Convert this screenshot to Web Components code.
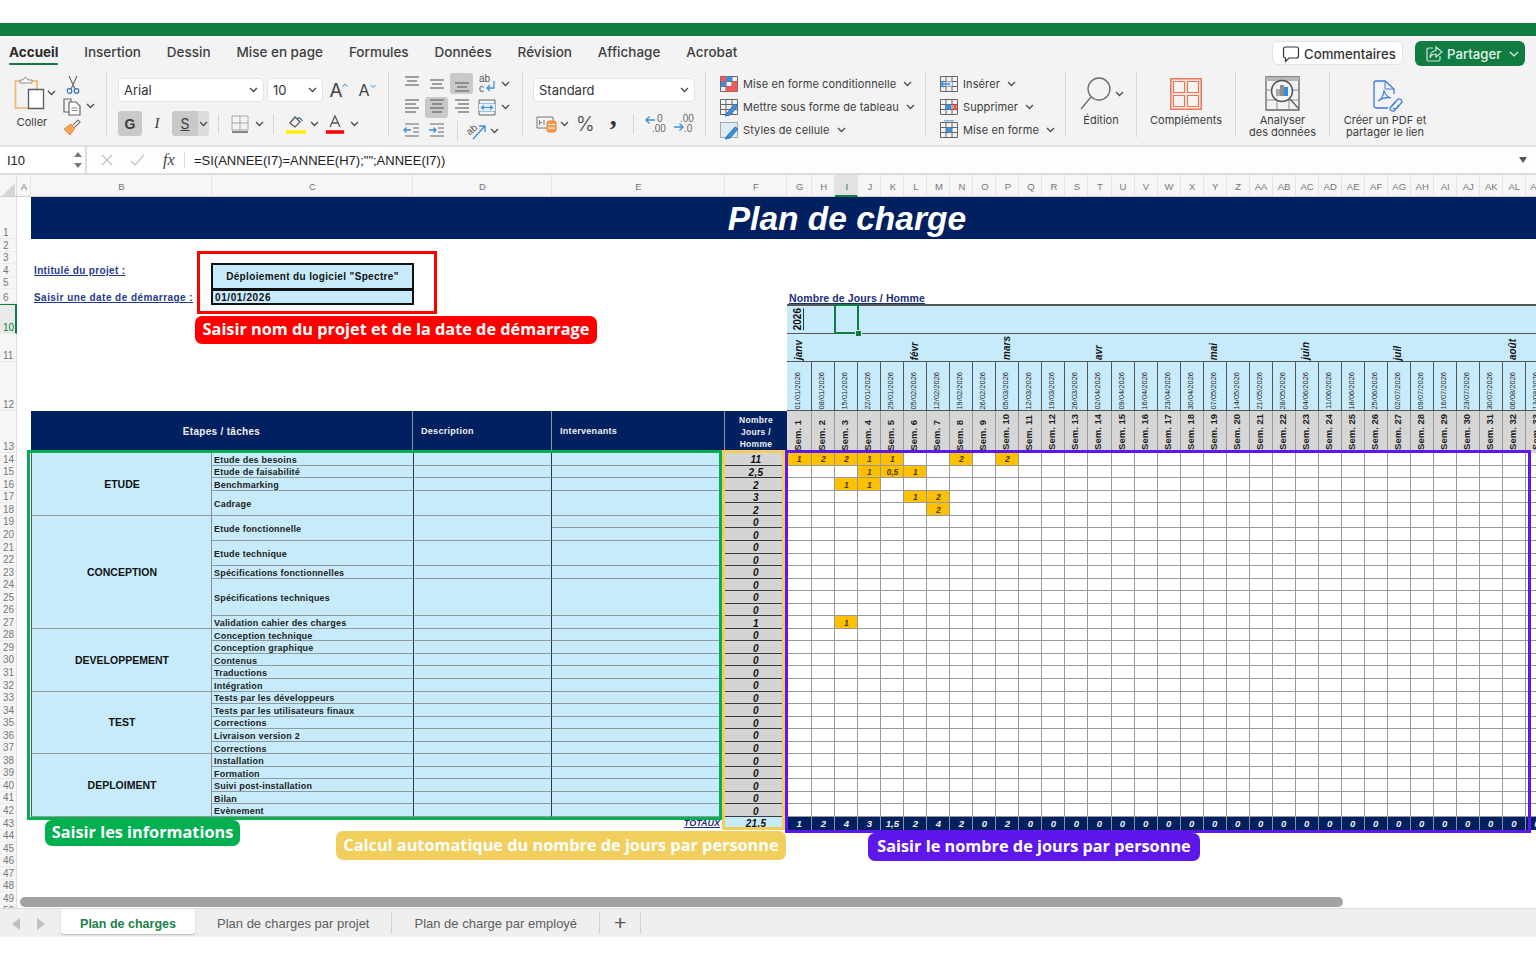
<!DOCTYPE html>
<html lang="fr">
<head>
<meta charset="utf-8">
<title>Plan de charge</title>
<style>
  html, body { margin: 0; background: #fff; }
  body { width: 1536px; height: 960px; overflow: hidden; display: flex; flex-direction: column; font-family: "Liberation Sans", Arial, sans-serif; }
  .title-gap { height: 23px; flex: none; }
</style>
</head>
<body>
<div class="title-gap"></div>
<xl-ribbon></xl-ribbon>
<xl-formula-bar cell="I10" formula='=SI(ANNEE(I7)=ANNEE(H7);"";ANNEE(I7))'></xl-formula-bar>
<xl-sheet>
  <xl-callout color="#ff0000" frame="197,251,240,63" label="195,316,402,28">Saisir nom du projet et de la date de démarrage</xl-callout>
  <xl-callout color="#00b050" frame="27,450,695,370" label="45,820,195,26">Saisir les informations</xl-callout>
  <xl-callout color="#f2cf5c" frame="722,450,63,380" label="336,831,450,29">Calcul automatique du nombre de jours par personne</xl-callout>
  <xl-callout color="#5e17eb" frame="785,450,746,383" label="868,833,332,28">Saisir le nombre de jours par personne</xl-callout>
</xl-sheet>
<xl-tabs>
  <xl-tab active>Plan de charges</xl-tab>
  <xl-tab>Plan de charges par projet</xl-tab>
  <xl-tab>Plan de charge par employé</xl-tab>
  <xl-tab plus>+</xl-tab>
</xl-tabs>

<script>
const BLUE = "#3f8fd6";

// horizontal lines used by the alignment buttons
function bars(rows) {
  return `<svg width="20" height="20" viewBox="0 0 20 20" fill="none" stroke="#666" stroke-width="1.2">` +
    rows.map(([y, a, b]) => `<path d="M${a} ${y}H${b}"/>`).join("") + `</svg>`;
}

function tableBase(extra) {
  return `<svg width="20" height="20" viewBox="0 0 20 20" fill="none"><path d="M1.5 2.5h17v15h-17zM1.5 7.5h17M1.5 12.5h17M7 2.5v15M13 2.5v15" stroke="#666" stroke-width="1"/>${extra}</svg>`;
}

const ICONS = {
  chevron: `<svg width="9" height="6" viewBox="0 0 9 6" fill="none"><path d="M1 1l3.5 3.5L8 1" stroke="#4a4a4a" stroke-width="1.3"/></svg>`,
  paste: `<svg width="36" height="36" viewBox="0 0 36 36" fill="none"><path d="M8 6H3.500v27h13M20 6h5v8" stroke="#f2b66d" stroke-width="1.700"/><path d="M8 8V5h3l2.500-3 2.500 3h4v3z" fill="#fff" stroke="#8c8c8c"/><path d="M16.500 14.500h15v19h-15z" fill="#fff" stroke="#5a5a5a" stroke-width="1.300"/></svg>`,
  cut: `<svg width="16" height="20" viewBox="0 0 16 20" fill="none"><path d="M4 1l6 13M12 1L6 14" stroke="#666" stroke-width="1.100"/><circle cx="4.500" cy="16" r="2.300" stroke="#2f75c0" stroke-width="1.200"/><circle cx="11.500" cy="16" r="2.300" stroke="#2f75c0" stroke-width="1.200"/></svg>`,
  copy: `<svg width="20" height="20" viewBox="0 0 20 20" fill="none"><path d="M7 16H2V3h7v3" stroke="#666" stroke-width="1.200"/><path d="M7 6h7l4 4v9H7z" fill="#fff" stroke="#666" stroke-width="1.200"/><path d="M9.500 12h6M9.500 14.500h6" stroke="#888"/></svg>`,
  brush: `<svg width="20" height="18" viewBox="0 0 20 18" fill="none"><path d="M11 7l5-5 2 2-5 5" fill="#fff" stroke="#777" stroke-width="1.200"/><path d="M2 11l7-5 4 4-5 7z" fill="#f5a55a" stroke="#e8863a"/></svg>`,
  borders: `<svg width="20" height="20" viewBox="0 0 20 20" fill="none"><path d="M2 2h16v14H2zM10 2v14M2 9h16" stroke="#8a8a8a" stroke-dasharray="1.500 .7"/><path d="M2 18h16" stroke="#555" stroke-width="1.400"/></svg>`,
  fill: `<svg width="22" height="20" viewBox="0 0 22 20" fill="none"><path d="M5 9l5-6 5 5-5 5z" stroke="#555" stroke-width="1.200"/><path d="M12 5c2-2 4-1 5 2" stroke="#2f75c0" stroke-width="1.500"/><path d="M1 18h20" stroke="#ffee00" stroke-width="3.500"/></svg>`,
  fontColor: `<svg width="20" height="20" viewBox="0 0 20 20" fill="none"><path d="M5 13l5-11 5 11M7 9h6" stroke="#555" stroke-width="1.300"/><path d="M1 18h18" stroke="#f00" stroke-width="3.500"/></svg>`,
  alignTop: bars([[3, 3, 17], [7, 5, 15], [11, 3, 17]]),
  alignMid: bars([[6, 3, 17], [10, 5, 15], [14, 3, 17]]),
  alignBot: bars([[9, 3, 17], [13, 5, 15], [17, 3, 17]]),
  alignLeft: bars([[3, 3, 17], [7, 3, 14], [11, 3, 17], [15, 3, 14]]),
  alignCenter: bars([[3, 3, 17], [7, 5, 15], [11, 3, 17], [15, 5, 15]]),
  alignRight: bars([[3, 3, 17], [7, 6, 17], [11, 3, 17], [15, 6, 17]]),
  wrap: `<svg width="20" height="22" viewBox="0 0 20 22"><text x="2" y="9" font-family="Liberation Sans" font-size="10" fill="#555">ab</text><text x="2" y="19" font-family="Liberation Sans" font-size="10" fill="#555">c</text><path d="M17 8v7h-7m3-3l-3 3 3 3" fill="none" stroke="${BLUE}" stroke-width="1.300"/></svg>`,
  merge: `<svg width="20" height="20" viewBox="0 0 20 20" fill="none"><path d="M2 3h16v15H2z" stroke="#666"/><path d="M2 7h16M2 14h16" stroke="${BLUE}"/><path d="M2 7h16v7H2z" fill="#e2f0fb"/><path d="M4.500 10.500h11M7 8.500l-2.500 2 2.500 2M13 8.500l2.500 2-2.500 2" stroke="${BLUE}" stroke-width="1.200"/></svg>`,
  outdent: `<svg width="20" height="20" viewBox="0 0 20 20" fill="none"><path d="M3 3h14M11 7h6M11 11h6M3 15h14" stroke="#666" stroke-width="1.200"/><path d="M9 9H2m2.500-2.500L2 9l2.500 2.500" stroke="${BLUE}" stroke-width="1.300"/></svg>`,
  indent: `<svg width="20" height="20" viewBox="0 0 20 20" fill="none"><path d="M3 3h14M11 7h6M11 11h6M3 15h14" stroke="#666" stroke-width="1.200"/><path d="M2 9h7M6.500 6.500L9 9l-2.500 2.500" stroke="${BLUE}" stroke-width="1.300"/></svg>`,
  rotate: `<svg width="22" height="20" viewBox="0 0 22 20" fill="none"><text x="1" y="12" transform="rotate(-40 6 10)" font-family="Liberation Sans" font-size="10" fill="#555">ab</text><path d="M7 18L19 5m-6 0h6v6" stroke="${BLUE}" stroke-width="1.400"/></svg>`,
  accounting: `<svg width="22" height="20" viewBox="0 0 22 20" fill="none"><path d="M1 3h16v11H1z" stroke="#777"/><path d="M3.500 6v5M8 6v5M3.500 8.500H6" stroke="#777"/><rect x="11" y="7" width="9" height="11" rx="2" fill="#f59b4b" stroke="#e8863a"/><path d="M12 10.500h7M12 14h7" stroke="#fff"/></svg>`,
  decLess: `<svg width="22" height="24" viewBox="0 0 22 24" fill="none"><path d="M1 8h9M4.500 4.500L1 8l3.500 3.500" stroke="${BLUE}" stroke-width="1.400"/><text x="12" y="10" font-family="Liberation Sans" font-size="10" fill="#666">0</text><text x="7" y="20" font-family="Liberation Sans" font-size="10" fill="#666">.00</text></svg>`,
  decMore: `<svg width="22" height="24" viewBox="0 0 22 24" fill="none"><text x="7" y="10" font-family="Liberation Sans" font-size="10" fill="#666">.00</text><path d="M1 15h9M6.500 11.500L10 15l-3.500 3.500" stroke="${BLUE}" stroke-width="1.400"/><text x="11" y="20" font-family="Liberation Sans" font-size="10" fill="#666">.0</text></svg>`,
  condFormat: tableBase(`<path d="M7 2.500h6v5H7zM2 7.500h5v5H2z" fill="#3f8fd6"/><path d="M1.500 2.500H7v5H1.500zM7 12.500h11.500v5H7zM13 7.500h5.500v5H13z" fill="#ef5a5a"/>`),
  tableFormat: tableBase(`<path d="M8 16l8-9 3 2-8 9-5 1z" fill="#3f8fd6" stroke="#2f75c0"/>`),
  cellStyle: tableBase(`<path d="M1.500 2.500h17v15h-17z" fill="#dfeaf5"/><path d="M8 16l8-9 3 2-8 9-5 1z" fill="#3f8fd6" stroke="#2f75c0"/>`),
  cellInsert: tableBase(`<path d="M7 7.500h6v5H7z" fill="#cfe6f9"/><path d="M11 10H2m3-3l-3 3 3 3" stroke="${BLUE}" stroke-width="1.400"/>`),
  cellDelete: tableBase(`<path d="M6 7.500h6v5H6z" fill="${BLUE}"/><path d="M13.500 7l5 6m0-6l-5 6" stroke="#ef4040" stroke-width="1.500"/>`),
  cellFormat: tableBase(`<path d="M7 7.500h6v5H7z" fill="${BLUE}"/><path d="M5 .8h10" stroke="${BLUE}"/>`),
  search: `<svg width="34" height="36" viewBox="0 0 34 36" fill="none"><circle cx="20" cy="13" r="11" stroke="#6a6a6a" stroke-width="1.300"/><path d="M12 21L2 33" stroke="#6a6a6a" stroke-width="1.300"/></svg>`,
  addins: `<svg width="32" height="32" viewBox="0 0 32 32" fill="none"><path d="M.8.8h30.400v30.400H.8z" fill="#fbe6df" stroke="#e9775a" stroke-width="1.500"/><path d="M3.500 3.500h11v11h-11zM17.500 3.500h11v11h-11zM3.500 17.500h11v11h-11zM17.500 17.500h11v11h-11z" fill="#f6f4f3" stroke="#e9775a" stroke-width="1.200"/></svg>`,
  analyze: `<svg width="36" height="36" viewBox="0 0 36 36" fill="none"><path d="M1 1h33v33H1z" stroke="#666" stroke-width="1.300"/><path d="M1 1h33v4H1z" fill="#b5b5b5"/><path d="M1 24h33M12 24v10M24 24v10M1 14h33" stroke="#8a8a8a"/><circle cx="17" cy="15" r="10.500" fill="#f4f4f4" stroke="#555" stroke-width="1.500"/><path d="M25 23l9 10" stroke="#666" stroke-width="1.600"/><path d="M11 13h4v7h-4z" fill="#a9a9a9"/><path d="M15 9h4v11h-4z" fill="#8d8d8d"/><path d="M19 11h4v9h-4z" fill="#2e8fd8"/></svg>`,
  pdf: `<svg width="30" height="32" viewBox="0 0 30 32" fill="none"><path d="M15 28H3a2 2 0 0 1-2-2V3a2 2 0 0 1 2-2h9l9 8v5" stroke="#3e78e6" stroke-width="1.300"/><path d="M12 1v8h9" stroke="#3e78e6"/><path d="M5 21c3-1 6-6 6-11 1 5 3 7 7 8-5-1-9 0-13 3z" stroke="#3e78e6" stroke-width="1.100"/><path d="M19 26l6-7a3 3 0 0 1 4 3l-5 6a3 3 0 0 1-4 0M22 22l-5 6a3 3 0 0 0 4 3l5-6" stroke="#3e78e6" stroke-width="1.300"/></svg>`,
  comment: `<svg width="18" height="18" viewBox="0 0 18 18" fill="none"><path d="M3.500 2h11A2 2 0 0 1 16.500 4v7a2 2 0 0 1-2 2H7l-3.500 3.500V13A2 2 0 0 1 1.500 11V4a2 2 0 0 1 2-2z" stroke="#333" stroke-width="1.200"/></svg>`,
  share: `<svg width="18" height="18" viewBox="0 0 18 18" fill="none"><path d="M8 3H3.500A1.500 1.500 0 0 0 2 4.500v10A1.500 1.500 0 0 0 3.500 16h10a1.500 1.500 0 0 0 1.500-1.500V11" stroke="#cfe6da" stroke-width="1.200"/><path d="M11 2l6 5-6 5V9C8 9 6 10 5 13c0-5 2-7 6-7.500z" stroke="#cfe6da" stroke-width="1.200"/></svg>`,
  chevronLight: `<svg width="10" height="6" viewBox="0 0 10 6" fill="none"><path d="M1 1l4 4 4-4" stroke="#e6f2ec" stroke-width="1.200"/></svg>`
};

class XlIcon extends HTMLElement {
  constructor() {
    super();
    this.attachShadow({ mode: "open" });
  }
  connectedCallback() {
    this.shadowRoot.innerHTML = `<style>:host{display:inline-flex;flex:none;align-items:center;justify-content:center}svg{display:block}</style>` + (ICONS[this.getAttribute("name")] || "");
  }
}
customElements.define("xl-icon", XlIcon);

const ribbonTemplate = document.createElement("template");
ribbonTemplate.innerHTML = `
<style>
  :host { display: block; flex: none; font-family: Inter, "Liberation Sans", sans-serif; color: #3c3c3c; }
  .brand { height: 13px; background: #107c41; }
  .ribbon { height: 109px; background: #f3f3f3; border-bottom: 2px solid #e1e1e1; }
  .tabs { height: 34px; display: flex; align-items: center; justify-content: space-between; padding: 0 11px 0 9px; }
  .tab-list { display: flex; gap: 25.850px; font-size: 13.500px; font-weight: 500; color: #3f3f3f; margin-top: -2px; }
  .tab-list span { position: relative; }
  .tab-list .on { font-weight: 700; color: #2c2c2c; }
  .tab-list .on::after { content: ""; position: absolute; left: 0; right: 0; bottom: -5px; height: 2.500px; background: #107c41; border-radius: 2px; }
  .actions { display: flex; gap: 12px; align-items: center; }
  .pill { height: 24px; box-sizing: border-box; border-radius: 6px; display: flex; align-items: center; font-size: 13.200px; font-weight: 500; padding-top: 1px; }
  .comments { width: 131px; background: #fff; border: 1px solid #e3e3e3; padding-left: 9px; gap: 4px; color: #333; }
  .share { width: 110px; height: 25px; background: #107c41; color: #e6f2ec; padding-left: 10px; gap: 4px; }
  .share xl-icon:last-child { margin-left: 4px; }
  .tools { height: 75px; display: flex; padding-top: 2px; box-sizing: border-box; }
  .g { height: 65px; box-sizing: border-box; flex: none; border-right: 1px solid #d6d6d6; }
  .row { display: flex; align-items: center; }
  .select { height: 24px; box-sizing: border-box; background: #fff; border: 1px solid #e4e4e4; border-radius: 5px; display: flex; align-items: center; justify-content: space-between; padding: 0 5px; font-size: 13px; color: #333; }
  .btn { display: flex; align-items: center; justify-content: center; height: 100%; flex: none; box-sizing: border-box; }
  .on-btn { background: #c9c9c9; border-radius: 3px; }
  .sep { width: 1px; height: 20px; background: #d6d6d6; flex: none; }
  .clip { width: 107px; display: flex; padding: 3px 0 0 12px; }
  .paste { width: 48px; }
  .paste .label { width: 40px; text-align: center; font-size: 11px; margin-top: 4px; }
  .clip-side { display: flex; flex-direction: column; margin-left: 2px; }
  .clip-side .row { height: 22px; }
  .font { width: 282px; padding: 6px 0 0 11px; }
  .font .row:last-child { height: 25px; margin-top: 9px; }
  .size-a { font-size: 19px; width: 16px; text-align: center; position: relative; color: #444; }
  .size-a svg { position: absolute; left: 14px; top: 4px; }
  .align { width: 134px; padding: 1px 0 0 11px; }
  .align .row { height: 21px; margin-bottom: 2.500px; }
  .align .btn { width: 23px; margin-right: 2px; }
  .num { width: 183px; padding: 6px 0 0 10px; }
  .num .row:last-child { height: 25px; margin-top: 9px; }
  .list { padding: 0 0 0 13px; font-size: 11px; letter-spacing: .1px; color: #3c3c3c; }
  .list .row { height: 23px; gap: 4px; }
  .list xl-icon[name="chevron"] { margin-left: 3px; }
  .styles { width: 220px; }
  .cells { width: 140px; }
  .big { display: flex; flex-direction: column; align-items: center; padding-top: 3px; font-size: 11px; line-height: 12.500px; text-align: center; }
  .big .pic { height: 37px; box-sizing: border-box; flex: none; display: flex; align-items: center; gap: 2px; margin-bottom: 1.500px; }
</style>
<div class="brand"></div>
<div class="ribbon">
  <div class="tabs">
    <div class="tab-list">
      <span class="on">Accueil</span><span>Insertion</span><span>Dessin</span><span>Mise en page</span><span>Formules</span><span>Données</span><span>Révision</span><span>Affichage</span><span>Acrobat</span>
    </div>
    <div class="actions">
      <div class="pill comments"><xl-icon name="comment"></xl-icon>Commentaires</div>
      <div class="pill share"><xl-icon name="share"></xl-icon>Partager<xl-icon name="chevronLight"></xl-icon></div>
    </div>
  </div>
  <div class="tools">
    <div class="g clip">
      <div class="paste">
        <div class="row"><xl-icon name="paste"></xl-icon><xl-icon name="chevron" style="margin-left:-1px"></xl-icon></div>
        <div class="label">Coller</div>
      </div>
      <div class="clip-side">
        <div class="row" style="padding-left:3px"><xl-icon name="cut"></xl-icon></div>
        <div class="row"><xl-icon name="copy"></xl-icon><xl-icon name="chevron" style="margin-left:4px"></xl-icon></div>
        <div class="row"><xl-icon name="brush"></xl-icon></div>
      </div>
    </div>
    <div class="g font">
      <div class="row">
        <div class="select" style="width:146px">Arial<xl-icon name="chevron"></xl-icon></div>
        <div class="select" style="width:56px;margin-left:3px">10<xl-icon name="chevron"></xl-icon></div>
        <div class="size-a" style="margin-left:5px">A<svg width="6" height="4"><path d="M.5 3.500L3 1l2.500 2.500" fill="none" stroke="#3f8fd6"/></svg></div>
        <div class="size-a" style="margin-left:12px;font-size:16px">A<svg width="6" height="4"><path d="M.5 1L3 3.500 5.500 1" fill="none" stroke="#3f8fd6"/></svg></div>
      </div>
      <div class="row">
        <div class="btn on-btn" style="width:24px;font-weight:700;font-size:14px;font-family:'Liberation Sans'">G</div>
        <div class="btn" style="width:30px;font:italic 15px 'Liberation Serif'">I</div>
        <div class="btn on-btn" style="width:26px;border-radius:3px 0 0 3px;font-size:14px;text-decoration:underline">S</div>
        <div class="btn" style="width:11px;background:#dcdcdc;border-radius:0 3px 3px 0"><xl-icon name="chevron"></xl-icon></div>
        <div class="sep" style="margin-left:9px"></div>
        <xl-icon name="borders" style="margin-left:11px"></xl-icon>
        <xl-icon name="chevron" style="margin-left:5px"></xl-icon>
        <div class="sep" style="margin-left:9px"></div>
        <xl-icon name="fill" style="margin-left:11px"></xl-icon>
        <xl-icon name="chevron" style="margin-left:3px"></xl-icon>
        <xl-icon name="fontColor" style="margin-left:6px"></xl-icon>
        <xl-icon name="chevron" style="margin-left:5px"></xl-icon>
      </div>
    </div>
    <div class="g align">
      <div class="row">
        <div class="btn"><xl-icon name="alignTop"></xl-icon></div><div class="btn"><xl-icon name="alignMid"></xl-icon></div><div class="btn on-btn"><xl-icon name="alignBot"></xl-icon></div><div class="btn"><xl-icon name="wrap"></xl-icon></div><xl-icon name="chevron" style="margin-left:1px"></xl-icon>
      </div>
      <div class="row">
        <div class="btn"><xl-icon name="alignLeft"></xl-icon></div><div class="btn on-btn"><xl-icon name="alignCenter"></xl-icon></div><div class="btn"><xl-icon name="alignRight"></xl-icon></div><div class="btn"><xl-icon name="merge"></xl-icon></div><xl-icon name="chevron" style="margin-left:1px"></xl-icon>
      </div>
      <div class="row">
        <div class="btn"><xl-icon name="outdent"></xl-icon></div><div class="btn"><xl-icon name="indent"></xl-icon></div>
        <div class="sep" style="margin:0 8px 0 7px"></div>
        <xl-icon name="rotate"></xl-icon><xl-icon name="chevron" style="margin-left:2px"></xl-icon>
      </div>
    </div>
    <div class="g num">
      <div class="row"><div class="select" style="width:162px">Standard<xl-icon name="chevron"></xl-icon></div></div>
      <div class="row">
        <xl-icon name="accounting" style="margin-left:3px"></xl-icon>
        <xl-icon name="chevron" style="margin-left:2px"></xl-icon>
        <div style="font-size:20px;font-weight:300;margin-left:7px;color:#444">%</div>
        <div style="font:700 28px/1 'Liberation Serif';margin:-16px 0 0 15px;color:#333">,</div>
        <div class="sep" style="margin-left:16px"></div>
        <xl-icon name="decLess" style="margin-left:11px"></xl-icon>
        <xl-icon name="decMore" style="margin-left:6px"></xl-icon>
      </div>
    </div>
    <div class="g list styles">
      <div class="row"><xl-icon name="condFormat"></xl-icon><span>Mise en forme conditionnelle</span><xl-icon name="chevron"></xl-icon></div>
      <div class="row"><xl-icon name="tableFormat"></xl-icon><span>Mettre sous forme de tableau</span><xl-icon name="chevron"></xl-icon></div>
      <div class="row"><xl-icon name="cellStyle"></xl-icon><span>Styles de cellule</span><xl-icon name="chevron"></xl-icon></div>
    </div>
    <div class="g list cells">
      <div class="row"><xl-icon name="cellInsert"></xl-icon><span>Insérer</span><xl-icon name="chevron"></xl-icon></div>
      <div class="row"><xl-icon name="cellDelete"></xl-icon><span>Supprimer</span><xl-icon name="chevron"></xl-icon></div>
      <div class="row"><xl-icon name="cellFormat"></xl-icon><span>Mise en forme</span><xl-icon name="chevron"></xl-icon></div>
    </div>
    <div class="g big" style="width:71px"><div class="pic"><xl-icon name="search"></xl-icon><xl-icon name="chevron"></xl-icon></div>Édition</div>
    <div class="g big" style="width:99px"><div class="pic"><xl-icon name="addins"></xl-icon></div>Compléments</div>
    <div class="g big" style="width:94px"><div class="pic"><xl-icon name="analyze"></xl-icon></div>Analyser<br>des données</div>
    <div class="g big" style="width:110px;border:0"><div class="pic" style="padding:5px 0 0 5px"><xl-icon name="pdf"></xl-icon></div>Créer un PDF et<br>partager le lien</div>
  </div>
</div>`;

class XlRibbon extends HTMLElement {
  constructor() {
    super();
    this.attachShadow({ mode: "open" }).appendChild(ribbonTemplate.content.cloneNode(true));
  }
}
customElements.define("xl-ribbon", XlRibbon);

class XlFormulaBar extends HTMLElement {
  constructor() {
    super();
    this.attachShadow({ mode: "open" });
  }
  connectedCallback() {
    const formula = this.getAttribute("formula").replace(/"/g, "&quot;");
    this.shadowRoot.innerHTML = `
      <style>
        :host { display: flex; flex: none; height: 28px; box-sizing: border-box; background: #fdfdfd; border-bottom: 2px solid #dcdcdc; font: 13px "Liberation Sans", sans-serif; color: #222; align-items: center; }
        .name { width: 87px; height: 100%; box-sizing: border-box; flex: none; border-right: 2px solid #dedede; display: flex; align-items: center; justify-content: space-between; padding: 0 2px 0 7px; background: #fff; }
        .tools { width: 98px; flex: none; display: flex; align-items: center; color: #c4c4c4; height: 16px; border-right: 1px solid #d8d8d8; box-sizing: border-box; }
        .fx { font: italic 16px "Liberation Serif", serif; color: #444; margin-left: 17px; }
        .value { padding-left: 9px; flex: 1; }
        .menu { width: 0; height: 0; border: 4px solid transparent; border-top: 6px solid #555; border-bottom: 0; margin-right: 9px; }
      </style>
      <div class="name">${this.getAttribute("cell")}
        <svg width="10" height="20" viewBox="0 0 10 20"><path d="M5 2l4 5H1zM5 18l4-5H1z" fill="#777"/></svg>
      </div>
      <div class="tools">
        <svg width="14" height="14" viewBox="0 0 14 14" style="margin-left:13px" fill="none" stroke="#c8c8c8" stroke-width="1.500"><path d="M2 2l10 10M12 2L2 12"/></svg>
        <svg width="16" height="14" viewBox="0 0 16 14" style="margin-left:16px" fill="none" stroke="#c8c8c8" stroke-width="1.500"><path d="M1 8l4 4 9-10"/></svg>
        <span class="fx">fx</span>
      </div>
      <div class="value">${formula}</div>
      <div class="menu"></div>`;
  }
}
customElements.define("xl-formula-bar", XlFormulaBar);

// --- sheet data ---
const ROW_LABELS = [1, 2, 3, 4, 5, 6, 10, 11, 12, 13];
for (let r = 14; r <= 50; r++) ROW_LABELS.push(r);
const ROW_HEIGHTS = { 1: 42.3, 2: 12.4, 3: 12.3, 4: 12.7, 5: 12.6, 6: 14.7, 10: 30, 11: 28, 12: 49.5, 13: 41.7 };
const COLUMN_LETTERS = "A B C D E F G H I J K L M N O P Q R S T U V W X Y Z AA AB AC AD AE AF AG AH AI AJ AK AL AM".split(" ");
const WEEK_COUNT = 33;

const STAGES = [
  ["ETUDE", 14, 18], ["CONCEPTION", 19, 27], ["DEVELOPPEMENT", 28, 32], ["TEST", 33, 37], ["DEPLOIMENT", 38, 42]
];
const TASKS = [
  ["Etude des besoins", 14], ["Etude de faisabilité", 15], ["Benchmarking", 16], ["Cadrage", 17, 18],
  ["Etude fonctionnelle", 19, 20], ["Etude technique", 21, 22], ["Spécifications fonctionnelles", 23],
  ["Spécifications techniques", 24, 26], ["Validation cahier des charges", 27], ["Conception technique", 28],
  ["Conception graphique", 29], ["Contenus", 30], ["Traductions", 31], ["Intégration", 32],
  ["Tests par les développeurs", 33], ["Tests par les utilisateurs finaux", 34], ["Corrections", 35],
  ["Livraison version 2", 36], ["Corrections", 37], ["Installation", 38], ["Formation", 39],
  ["Suivi post-installation", 40], ["Bilan", 41], ["Evènement", 42]
];
// row -> { week number: days }
const DAYS = {
  14: { 1: 1, 2: 2, 3: 2, 4: 1, 5: 1, 8: 2, 10: 2 },
  15: { 4: 1, 5: 0.5, 6: 1 },
  16: { 3: 1, 4: 1 },
  17: { 6: 1, 7: 2 },
  18: { 7: 2 },
  27: { 3: 1 }
};
const MONTHS = { 1: "janv", 6: "févr", 10: "mars", 14: "avr", 19: "mai", 23: "juin", 27: "juil", 32: "août" };

const fr = (n) => String(n).replace(".", ",");

class XlSheet extends HTMLElement {
  constructor() {
    super();
    this.attachShadow({ mode: "open" });
    this.shadowRoot.innerHTML = `<style>${XlSheet.css}</style><div class="wrap"><div class="grid">${this.buildGrid()}</div><div class="scroll"></div><slot></slot></div>`;
  }

  // c1/c2 are sheet columns (inclusive), r1/r2 sheet row labels
  cell(c1, c2, r1, r2, cls, text = "") {
    const col = (c) => (c === "head" ? 1 : COLUMN_LETTERS.indexOf(c) + 2);
    const row = (r) => (r === "head" ? 1 : ROW_LABELS.indexOf(r) + 2);
    return `<div class="${cls}" style="grid-area:${row(r1)}/${col(c1)}/${row(r2) + 1}/${col(c2) + 1}">${text}</div>`;
  }

  buildGrid() {
    const c = this.cell.bind(this);
    const weekCol = (w) => COLUMN_LETTERS[5 + w];
    let html = c("head", "head", "head", "head", "corner", `<svg width="14" height="14"><path d="M13 1v13H0z" fill="#d6d6d6"/></svg>`);

    COLUMN_LETTERS.forEach((l) => { html += c(l, l, "head", "head", l === "I" ? "ch sel" : "ch", l); });
    ROW_LABELS.forEach((r) => { html += c("head", "head", r, r, r === 10 ? "rh sel" : "rh", r); });

    html += c("B", "AM", 1, 1, "banner");
    html += `<div class="title" style="grid-area:2/4/3/40">Plan de charge</div>`;

    html += c("B", "B", 4, 4, "link", "Intitulé du projet :");
    html += c("B", "B", 6, 6, "link low", "Saisir une date de démarrage :");
    html += c("C", "C", 4, 5, "pbox name", 'Déploiement du logiciel "Spectre"');
    html += c("C", "C", 6, 6, "pbox date", "01/01/2026");
    html += c("G", "P", 6, 6, "link wide", "Nombre de Jours / Homme");

    // timeline header
    html += c("G", "AM", 10, 10, "year");
    html += c("G", "G", 10, 10, "yearv", "<span>2026</span>");
    html += c("I", "I", 10, 10, "active");
    html += c("G", "AM", 11, 11, "months");
    const dayMs = 86400000;
    for (let w = 1; w <= WEEK_COUNT; w++) {
      const col = weekCol(w);
      if (MONTHS[w]) html += c(col, col, 11, 11, "month", `<span>${MONTHS[w]}</span>`);
      const d = new Date(Date.UTC(2026, 0, 1) + (w - 1) * 7 * dayMs);
      const stamp = `${String(d.getUTCDate()).padStart(2, "0")}/${String(d.getUTCMonth() + 1).padStart(2, "0")}/${d.getUTCFullYear()}`;
      html += c(col, col, 12, 12, "dt", `<span>${stamp}</span>`);
      html += c(col, col, 13, 13, "sem", `<span>Sem. ${w}</span>`);
    }

    // table head
    html += c("B", "C", 13, 13, "th center big", "Etapes / tâches");
    html += c("D", "D", 13, 13, "th", "Description");
    html += c("E", "E", 13, 13, "th", "Intervenants");
    html += c("F", "F", 13, 13, "th center nb", "Nombre<br>Jours /<br>Homme");

    // table body
    STAGES.forEach(([name, a, b]) => { html += c("B", "B", a, b, "stage", name); });
    TASKS.forEach(([name, a, b = a]) => {
      html += c("C", "C", a, b, "task", name);
      html += c("D", "D", a, b, "blank d");
      if (a === 19) {
        html += c("E", "E", 19, 19, "blank");
        html += c("E", "E", 20, 20, "blank");
      } else {
        html += c("E", "E", a, b, "blank");
      }
    });

    // week grid, per-row and per-week totals
    const weekTotals = new Array(WEEK_COUNT + 1).fill(0);
    let grand = 0;
    for (let r = 14; r <= 42; r++) {
      const days = DAYS[r] || {};
      let rowSum = 0;
      for (let w = 1; w <= WEEK_COUNT; w++) {
        const v = days[w];
        if (v) { rowSum += v; weekTotals[w] += v; }
        html += c(weekCol(w), weekCol(w), r, r, v ? "wk fill" : "wk", v ? fr(v) : "");
      }
      grand += rowSum;
      html += c("F", "F", r, r, "count", fr(rowSum));
    }
    html += c("E", "E", 43, 43, "totaux", "TOTAUX");
    html += c("F", "F", 43, 43, "count total", fr(grand));
    for (let w = 1; w <= WEEK_COUNT; w++) {
      html += c(weekCol(w), weekCol(w), 43, 43, "sum", fr(weekTotals[w]));
    }
    return html;
  }

  static get css() {
    const rows = ROW_LABELS.map((r) => `${ROW_HEIGHTS[r] || 12.55}px`).join(" ");
    return `
      :host { display: block; flex: none; height: 733px; font-family: "Liberation Sans", Arial, sans-serif; color: #111; }
      .wrap { position: relative; height: 733px; overflow: hidden; background: #fff; }
      .grid { display: grid; width: max-content; grid-template-columns: 17px 14px 181px 201px 139px 173px 62px 25.3px repeat(${WEEK_COUNT - 1}, 23.03px); grid-template-rows: 22px ${rows}; }
      .grid > div { box-sizing: border-box; min-width: 0; min-height: 0; }
      .corner { background: #f6f6f6; border-right: 1px solid #dcdcdc; border-bottom: 1px solid #cfcfcf; display: flex; align-items: flex-end; justify-content: flex-end; }
      .ch { background: #f6f6f6; border-right: 1px solid #e4e4e4; border-bottom: 1px solid #cfcfcf; font-size: 9.5px; color: #777; display: flex; align-items: center; justify-content: center; white-space: nowrap; padding: 2px 0 0 1px; }
      .ch.sel { background: #e2e2e2; color: #107c41; border-bottom: 2px solid #107c41; }
      .rh { background: #f6f6f6; border-right: 1px solid #dcdcdc; border-bottom: 1px solid #ececec; font-size: 10px; color: #777; display: flex; align-items: flex-end; padding: 0 0 0 3px; line-height: 11px; overflow: hidden; }
      .rh.sel { background: #e9e9e9; color: #107c41; border-right: 2px solid #107c41; border-top: 1px solid #107c41; }
      .banner { background: #002060; }
      .title { color: #fff; font: italic 700 33.500px/44px "Liberation Sans", sans-serif; text-align: center; padding-right: 44px; z-index: 1; }
      .link { color: #1f3a8a; font-weight: 700; font-size: 10px; letter-spacing: .35px; text-decoration: underline; padding-left: 3px; white-space: nowrap; align-self: center; }
      .link.low { align-self: end; padding-bottom: 1px; letter-spacing: .45px; }
      .link.wide { padding-left: 2px; color: #1a2f7a; font-size: 10.5px; letter-spacing: .1px; align-self: end; padding-bottom: 0; }
      .pbox { background: #c7ebfb; border: 2px solid #111; font-weight: 700; font-size: 10px; display: flex; align-items: center; letter-spacing: .35px; margin-left: -1px; margin-right: -1px; }
      .pbox.name { justify-content: center; margin-bottom: -1px; margin-top: -1px; }
      .pbox.date { padding-left: 2px; letter-spacing: .6px; margin-bottom: -1px; }
      .year { background: #c7ebfb; border-top: 2px solid #555; border-bottom: 1px solid #555; }
      .yearv, .month { display: flex; align-items: center; justify-content: center; font-size: 10px; font-weight: 700; padding-right: 3px; }
      .yearv span { writing-mode: vertical-rl; transform: rotate(180deg); border-left: 1px solid #333; }
      .active { border: 2px solid #107c41; position: relative; margin: 0 -1px 0 -1px; }
      .active::after { content: ""; position: absolute; right: -5px; bottom: -5px; width: 7px; height: 7px; background: #107c41; border: 1px solid #c7ebfb; box-sizing: border-box; }
      .months { background: #c7ebfb; border-bottom: 1px solid #555; }
      .month { font-style: italic; align-items: flex-end; padding-bottom: 2px; }
      .month span { writing-mode: vertical-rl; transform: rotate(180deg); }
      .dt { background: #c7ebfb; border-right: 1px solid #555; border-bottom: 1px solid #555; display: flex; align-items: flex-end; justify-content: center; font-size: 7.5px; color: #222; padding: 0 3px 1px 0; overflow: hidden; }
      .dt span, .sem span { writing-mode: vertical-rl; transform: rotate(180deg); white-space: nowrap; }
      .sem { background: #d6d6d6; border-right: 1px solid #999; display: flex; align-items: flex-end; justify-content: center; font-size: 9.5px; font-weight: 700; color: #222; overflow: hidden; padding: 0 3px 3px 0; }
      .th { background: #002060; color: #f0f0f0; font-weight: 700; font-size: 9px; letter-spacing: .3px; border-right: 1px solid #8a93a8; display: flex; align-items: center; padding: 0 0 2px 8px; }
      .th.center { justify-content: center; text-align: center; padding: 0 0 2px; }
      .th.big { font-size: 10px; }
      .th.nb { line-height: 12px; font-size: 8.5px; border: 0; align-items: center; padding-top: 2px; }
      .stage { background: #c7ebfb; border-left: 1px solid #555; border-right: 1px solid #8f8f8f; border-bottom: 1.500px solid #9a9a9a; font-weight: 700; font-size: 10.5px; display: flex; align-items: center; justify-content: center; padding-left: 1px; }
      .task { background: #c7ebfb; border-bottom: 1px solid #8f9aa0; font-weight: 700; font-size: 9px; letter-spacing: .2px; display: flex; align-items: center; padding: 2px 0 0 2px; white-space: nowrap; color: #1c1c1c; }
      .blank { background: #c7ebfb; border-bottom: 1px solid #8f9aa0; border-right: 1px solid #333; }
      .blank.d { border-left: 1px solid #333; }
      .count { background: #d4d4d4; border-bottom: 1.500px solid #3a3a3a; font: italic 700 10px "Liberation Sans", sans-serif; display: flex; align-items: center; justify-content: center; letter-spacing: .3px; padding-top: 2px; }
      .count.total { background: #c7ebfb; border-bottom: 0; padding-top: 0; }
      .totaux { color: #1a2f7a; font: italic 700 9px "Liberation Sans", sans-serif; text-decoration: underline; text-align: right; padding: 1px 5px 0 0; }
      .wk { border-right: 1px solid #999; border-bottom: 1px solid #999; font: italic 700 8.5px "Liberation Sans", sans-serif; display: flex; align-items: center; justify-content: center; color: #4a3a00; padding-top: 1px; }
      .wk.fill { background: #ffc000; }
      .sum { background: #002060; color: #f2f2f2; border-right: 1px solid #8a93a8; font: italic 700 9.5px "Liberation Sans", sans-serif; display: flex; align-items: center; justify-content: center; }
      .scroll { position: absolute; left: 20px; top: 722px; width: 1323px; height: 10px; border-radius: 5px; background: #a2a2a2; }
    `;
  }
}
customElements.define("xl-sheet", XlSheet);

// a coloured frame drawn over the sheet, with its caption
class XlCallout extends HTMLElement {
  constructor() {
    super();
    this.attachShadow({ mode: "open" });
  }
  connectedCallback() {
    const SHEET_TOP = 175;
    const [fx, fy, fw, fh] = this.getAttribute("frame").split(",").map(Number);
    const [lx, ly, lw, lh] = this.getAttribute("label").split(",").map(Number);
    const color = this.getAttribute("color");
    this.shadowRoot.innerHTML = `
      <style>
        :host { position: absolute; inset: 0; pointer-events: none; display: block; }
        .frame { position: absolute; box-sizing: border-box; border: 3.500px solid ${color}; left: ${fx}px; top: ${fy - SHEET_TOP}px; width: ${fw}px; height: ${fh}px; }
        .label { position: absolute; box-sizing: border-box; padding-bottom: 2px; left: ${lx}px; top: ${ly - SHEET_TOP}px; width: ${lw}px; height: ${lh}px; background: ${color}; border-radius: 7px; color: #fff; font: 700 16.300px "Open Sans", sans-serif; display: flex; align-items: center; justify-content: center; white-space: nowrap; }
      </style>
      <div class="frame"></div>
      <div class="label"><slot></slot></div>`;
  }
}
customElements.define("xl-callout", XlCallout);

class XlTab extends HTMLElement {
  constructor() {
    super();
    this.attachShadow({ mode: "open" });
    this.shadowRoot.innerHTML = `
      <style>
        :host { display: flex; align-items: center; height: 22px; margin-top: 3px; padding: 0 22px; border-right: 1px solid #d2d2d2; font-size: 13px; color: #5e5e5e; box-sizing: border-box; white-space: nowrap; }
        :host([active]) { width: 134px; height: 25px; margin-top: 0; padding: 4px 0 0; justify-content: center; background: #fff; color: #1b8148; font-size: 12.500px; font-weight: 700; border: 0; border-radius: 0 0 3px 3px; box-shadow: 0 1px 1.500px #b5b5b5; }
        :host([plus]) { padding: 0 14px; font-size: 21px; color: #555; }
      </style><slot></slot>`;
  }
}
customElements.define("xl-tab", XlTab);

class XlTabs extends HTMLElement {
  constructor() {
    super();
    this.attachShadow({ mode: "open" });
    this.shadowRoot.innerHTML = `
      <style>
        :host { display: flex; flex: none; height: 29px; box-sizing: border-box; background: #efefef; border-top: 1px solid #dcdcdc; font-family: "Liberation Sans", sans-serif; align-items: flex-start; }
        .arrows { width: 61px; flex: none; height: 29px; display: flex; align-items: center; padding-left: 12px; gap: 15px; box-sizing: border-box; }
      </style>
      <div class="arrows">
        <svg width="9" height="12"><path d="M8 0v12L0 6z" fill="#c0c0c0"/></svg>
        <svg width="9" height="12"><path d="M1 0v12l8-6z" fill="#c0c0c0"/></svg>
      </div>
      <slot></slot>`;
  }
}
customElements.define("xl-tabs", XlTabs);
</script>
</body>
</html>
